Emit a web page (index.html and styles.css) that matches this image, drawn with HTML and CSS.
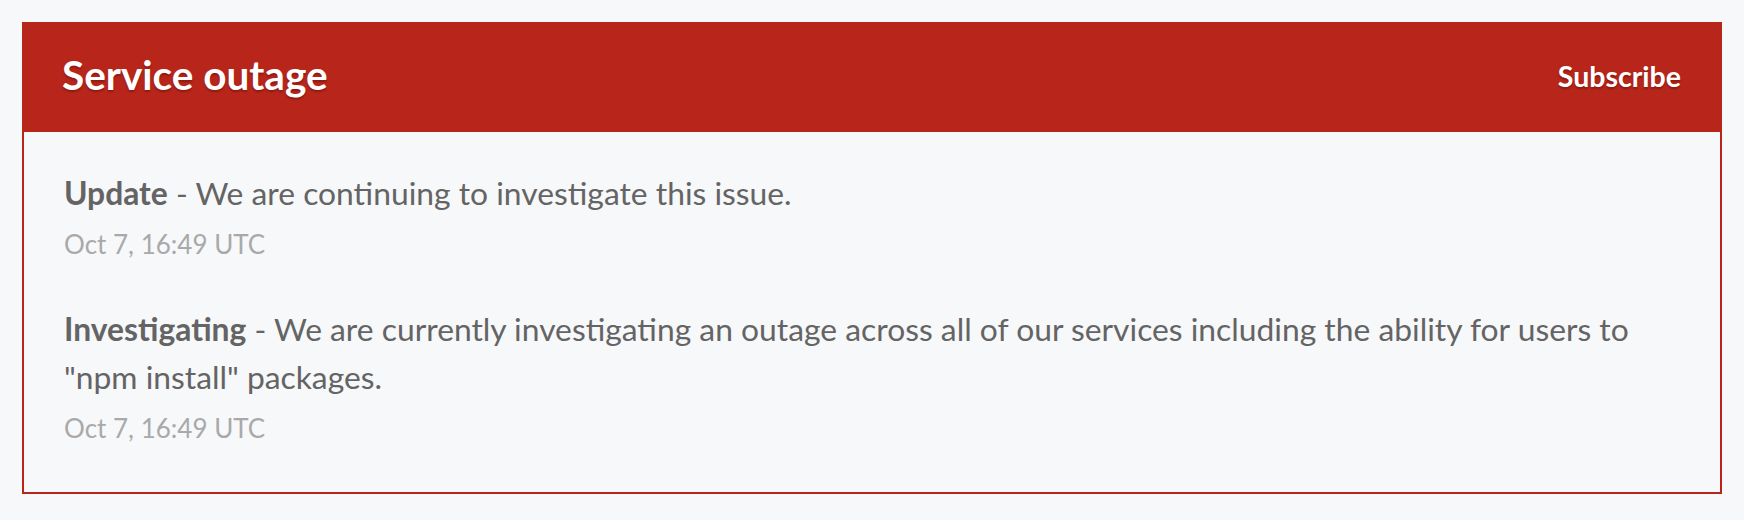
FILE: index.html
```html
<!DOCTYPE html>
<html lang="en">
<head>
<meta charset="utf-8">
<title>Service outage</title>
<link rel="stylesheet" href="styles.css">
</head>
<body>
<div class="page">
  <section class="incident">
    <header class="incident-header">
      <h1 class="incident-title">Service outage</h1>
      <a class="subscribe" href="#">Subscribe</a>
    </header>
    <div class="incident-body">
      <div class="update">
        <p class="update-text"><strong>Update</strong> - We are continuing to investigate this issue.</p>
        <div class="update-time">Oct 7, 16:49 UTC</div>
      </div>
      <div class="update">
        <p class="update-text"><strong>Investigating</strong> - We are currently investigating an outage across all of our services including the ability for users to "npm install" packages.</p>
        <div class="update-time">Oct 7, 16:49 UTC</div>
      </div>
    </div>
  </section>
</div>
</body>
</html>
```
FILE: styles.css
```css
html, body {
  margin: 0;
  padding: 0;
  background: #f7f8fa;
}

body {
  font-family: "Lato", "Open Sans", sans-serif;
  -webkit-font-smoothing: antialiased;
}

.page {
  padding: 22px 22px;
}

.incident {
  border: 2px solid #b8261b;
  background: #f7f8fa;
}

.incident-header {
  background: #b8261b;
  height: 110px;
  margin: -2px -2px 0;
  padding: 0 41px 0 40px;
  display: flex;
  align-items: center;
  justify-content: space-between;
}

.incident-title {
  margin: 0;
  font-size: 40.5px;
  font-weight: 700;
  line-height: 1;
  color: #ffffff;
  text-shadow: 0 2px 2px rgba(90, 10, 5, 0.45);
  position: relative;
  top: -2px;
}

.subscribe {
  font-size: 28.5px;
  font-weight: 700;
  color: #ffffff;
  text-decoration: none;
  text-shadow: 0 2px 2px rgba(90, 10, 5, 0.45);
  position: relative;
  top: -1px;
}

.incident-body {
  padding: 37px 40px 44px;
  display: flex;
  flex-direction: column;
  gap: 41px;
}

.update-text {
  margin: 0;
  font-size: 31.8px;
  line-height: 48px;
  color: #646464;
}

.update-text strong {
  font-weight: 700;
}

.update-time {
  margin-top: 8px;
  font-size: 26px;
  line-height: 39px;
  color: #a9a9a9;
}
```
